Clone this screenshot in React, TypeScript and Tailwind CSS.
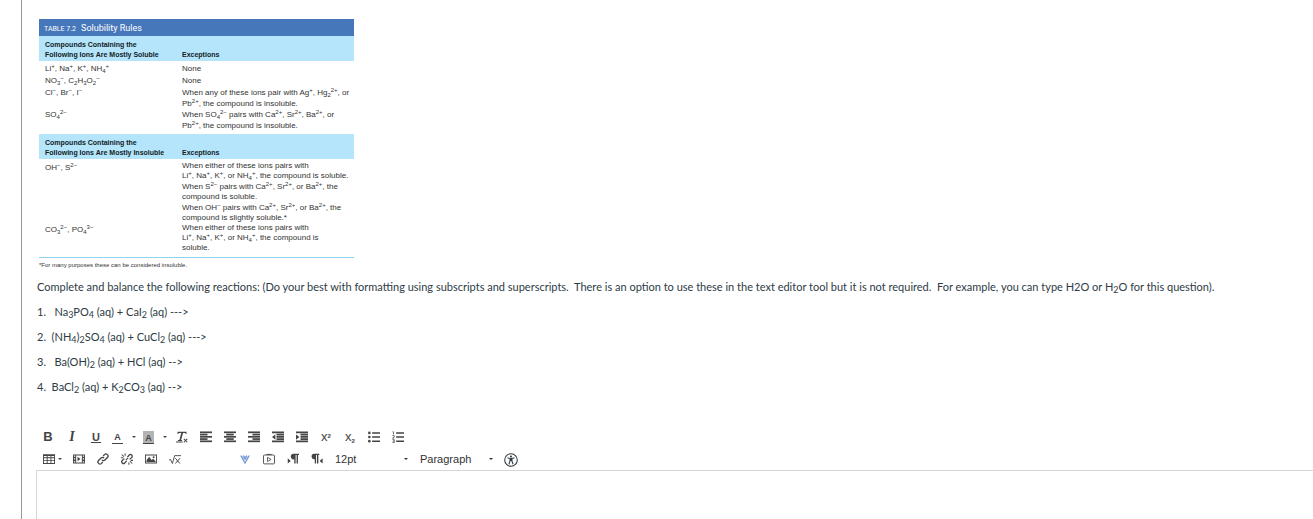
import type { ReactNode } from "react";

const iconBase = "h-3 w-3 shrink-0";

function Icon({ children, className = iconBase }: { children: ReactNode; className?: string }) {
  return (
    <svg viewBox="0 0 16 16" className={className} fill="currentColor" aria-hidden="true">
      {children}
    </svg>
  );
}

function Caret() {
  return (
    <svg viewBox="0 0 4 2" className="h-[2px] w-1 shrink-0" fill="currentColor" aria-hidden="true">
      <path d="M0 0h4L2 2z" />
    </svg>
  );
}

function Tool({ label, children }: { label: string; children: ReactNode }) {
  return (
    <button type="button" aria-label={label} className="flex h-5 w-6 shrink-0 items-center justify-center">
      {children}
    </button>
  );
}

function SplitTool({ label, children }: { label: string; children: ReactNode }) {
  return (
    <button type="button" aria-label={label} className="flex h-5 w-[31px] shrink-0 items-center justify-between pr-[3px] pl-1">
      {children}
      <Caret />
    </button>
  );
}

function Bars({ rows }: { rows: [number, number][] }) {
  return (
    <Icon>
      {rows.map(([x, w], i) => (
        <rect key={i} x={x} y={0.6 + i * 3} width={w} height={2.3} />
      ))}
    </Icon>
  );
}

function Sub({ children }: { children: ReactNode }) {
  return <sub className="text-[6px]">{children}</sub>;
}

function Sup({ children }: { children: ReactNode }) {
  return <sup className="text-[6px]">{children}</sup>;
}

function BandRow({ kind }: { kind: string }) {
  return (
    <tr className="h-[25px] bg-[#b5e5fa] text-left align-top text-[7px] leading-[10px] text-[#111c26]">
      <th scope="col" className="w-[143px] pt-1 pl-[6px] font-bold">
        Compounds Containing the
        <br />
        Following Ions Are Mostly {kind}
      </th>
      <th scope="col" className="pt-[14px] font-bold">
        Exceptions
      </th>
    </tr>
  );
}

function SolubilityTable() {
  return (
    <div className="ml-[2px] w-[315px] font-['Liberation_Sans',sans-serif] text-[8px] whitespace-nowrap text-[#333]">
      <table className="w-full border-collapse border-b border-[#8fd3ef]">
        <caption className="h-[17px] bg-[#4777bb] pl-[5px] text-left font-['Roboto',sans-serif] text-[9px] leading-[19px] text-white">
          <span className="mr-[5px] text-[7px]">TABLE 7.2</span>
          Solubility Rules
        </caption>
        <tbody>
          <BandRow kind="Soluble" />
          <tr className="h-[14px] align-bottom leading-[12px]">
            <td className="pl-[6px]">
              Li<Sup>+</Sup>, Na<Sup>+</Sup>, K<Sup>+</Sup>, NH<Sub>4</Sub><Sup>+</Sup>
            </td>
            <td>None</td>
          </tr>
          <tr className="leading-[12px]">
            <td className="pl-[6px]">
              NO<Sub>3</Sub><Sup>−</Sup>, C<Sub>2</Sub>H<Sub>3</Sub>O<Sub>2</Sub><Sup>−</Sup>
            </td>
            <td>None</td>
          </tr>
          <tr className="align-top leading-[11px]">
            <td className="pl-[6px]">
              Cl<Sup>−</Sup>, Br<Sup>−</Sup>, I<Sup>−</Sup>
            </td>
            <td>
              When any of these ions pair with Ag<Sup>+</Sup>, Hg<Sub>2</Sub><Sup>2+</Sup>, or
              <br />
              Pb<Sup>2+</Sup>, the compound is insoluble.
            </td>
          </tr>
          <tr className="h-[25px] align-top leading-[11px]">
            <td className="pl-[6px]">
              SO<Sub>4</Sub><Sup>2−</Sup>
            </td>
            <td>
              When SO<Sub>4</Sub><Sup>2−</Sup> pairs with Ca<Sup>2+</Sup>, Sr<Sup>2+</Sup>, Ba<Sup>2+</Sup>, or
              <br />
              Pb<Sup>2+</Sup>, the compound is insoluble.
            </td>
          </tr>
          <BandRow kind="Insoluble" />
          <tr className="align-top leading-[10px]">
            <td className="pt-1 pl-[6px]">
              OH<Sup>−</Sup>, S<Sup>2−</Sup>
            </td>
            <td className="pt-[2px]">
              <p className="pb-px">
                When either of these ions pairs with
                <br />
                Li<Sup>+</Sup>, Na<Sup>+</Sup>, K<Sup>+</Sup>, or NH<Sub>4</Sub><Sup>+</Sup>, the compound is soluble.
              </p>
              <p className="pb-px">
                When S<Sup>2−</Sup> pairs with Ca<Sup>2+</Sup>, Sr<Sup>2+</Sup>, or Ba<Sup>2+</Sup>, the
                <br />
                compound is soluble.
              </p>
              <p>
                When OH<Sup>−</Sup> pairs with Ca<Sup>2+</Sup>, Sr<Sup>2+</Sup>, or Ba<Sup>2+</Sup>, the
                <br />
                compound is slightly soluble.*
              </p>
            </td>
          </tr>
          <tr className="align-top leading-[10px]">
            <td className="pt-[2px] pl-[6px]">
              CO<Sub>3</Sub><Sup>2−</Sup>, PO<Sub>4</Sub><Sup>3−</Sup>
            </td>
            <td className="pb-1">
              When either of these ions pairs with
              <br />
              Li<Sup>+</Sup>, Na<Sup>+</Sup>, K<Sup>+</Sup>, or NH<Sub>4</Sub><Sup>+</Sup>, the compound is
              <br />
              soluble.
            </td>
          </tr>
        </tbody>
      </table>
      <p className="pt-[2px] text-[6px] leading-[10px]">*For many purposes these can be considered insoluble.</p>
    </div>
  );
}

function Q({ children }: { children: ReactNode }) {
  return <sub className="text-[9px]">{children}</sub>;
}

function Question() {
  return (
    <div className="mt-1 text-[11px] leading-[25px] whitespace-pre-wrap text-[#2d3b45]">
      <p>
        {"Complete and balance the following reactions: (Do your best with formatting using subscripts and superscripts.  There is an option to use these in the text editor tool but it is not required.  For example, you can type H2O or H"}
        <Q>2</Q>O for this question).
      </p>
      <p>
        {"1.   Na"}<Q>3</Q>PO<Q>4</Q> (aq) + CaI<Q>2</Q>{" (aq) --->"}
      </p>
      <p>
        {"2.  (NH"}<Q>4</Q>)<Q>2</Q>SO<Q>4</Q> (aq) + CuCl<Q>2</Q>{" (aq) --->"}
      </p>
      <p>
        {"3.   Ba(OH)"}<Q>2</Q>{" (aq) + HCl (aq) -->"}
      </p>
      <p>
        {"4.  BaCl"}<Q>2</Q> (aq) + K<Q>2</Q>CO<Q>3</Q>{" (aq) -->"}
      </p>
    </div>
  );
}

const linkPath =
  "M6.6 9.4a2.8 2.8 0 0 0 4 0l3.3-3.3a2.6 2.6 0 0 0-3.9-3.9L8.2 4M9.4 6.6a2.8 2.8 0 0 0-4 0L2.1 9.9A2.6 2.6 0 0 0 6 13.8L7.8 12";

function Toolbar() {
  return (
    <div role="toolbar" aria-label="Formatting" className="font-['Liberation_Sans',sans-serif] text-[#444]">
      <div className="flex h-[22px] items-center">
        <Tool label="Bold">
          <span className="text-[13px] leading-4 font-bold">B</span>
        </Tool>
        <Tool label="Italic">
          <span className="font-['Liberation_Serif',serif] text-[14px] leading-4 font-bold italic">I</span>
        </Tool>
        <Tool label="Underline">
          <span className="border-b border-[#444] px-px text-[11px] leading-[10px] font-bold">U</span>
        </Tool>
        <SplitTool label="Text color">
          <span className="w-[11px] border-b border-[#444] pt-[2px] text-center text-[9px] leading-[11px] font-bold">A</span>
        </SplitTool>
        <SplitTool label="Background color">
          <span className="w-[11px] border-b border-[#444] bg-[#b3b3b3] pt-[2px] text-center text-[9px] leading-[10px] font-bold">A</span>
        </SplitTool>
        <Tool label="Clear formatting">
          <Icon>
            <path d="M2 1h12v3h-1l-.7-1.4H9.4L6.8 12H8v1.4H2.5V12h2L7 2.6H4L2.8 4H2zM0 14h9v1.3H0z" />
            <path d="M10.5 10.5l4.5 4.5M15 10.5L10.5 15" stroke="currentColor" strokeWidth="1.4" />
          </Icon>
        </Tool>
        <Tool label="Align left">
          <Bars rows={[[0, 16], [0, 10], [0, 16], [0, 10], [0, 16]]} />
        </Tool>
        <Tool label="Align center">
          <Bars rows={[[0, 16], [3, 10], [0, 16], [3, 10], [0, 16]]} />
        </Tool>
        <Tool label="Align right">
          <Bars rows={[[0, 16], [6, 10], [0, 16], [6, 10], [0, 16]]} />
        </Tool>
        <Tool label="Decrease indent">
          <Icon>
            <path d="M0 .6h16v2.3H0zM6 3.6h10v2.3H6zM6 6.6h10v2.3H6zM6 9.6h10v2.3H6zM0 12.6h16v2.3H0zM4.5 4.5v7L0 8z" />
          </Icon>
        </Tool>
        <Tool label="Increase indent">
          <Icon>
            <path d="M0 .6h16v2.3H0zM6 3.6h10v2.3H6zM6 6.6h10v2.3H6zM6 9.6h10v2.3H6zM0 12.6h16v2.3H0zM0 4.5v7L4.5 8z" />
          </Icon>
        </Tool>
        <Tool label="Superscript">
          <span className="text-[13px] leading-4">
            x<sup className="text-[6px] font-bold">2</sup>
          </span>
        </Tool>
        <Tool label="Subscript">
          <span className="text-[13px] leading-4">
            x<sub className="text-[6px] font-bold">2</sub>
          </span>
        </Tool>
        <Tool label="Bullet list">
          <Icon>
            <path d="M5.5 1.5H16v2H5.5zM5.5 7H16v2H5.5zM5.5 12.5H16v2H5.5z" />
            <circle cx="1.8" cy="2.5" r="1.7" />
            <circle cx="1.8" cy="8" r="1.7" />
            <circle cx="1.8" cy="13.5" r="1.7" />
          </Icon>
        </Tool>
        <Tool label="Numbered list">
          <Icon>
            <path d="M5.5 1.5H16v2H5.5zM5.5 7H16v2H5.5zM5.5 12.5H16v2H5.5z" />
            <path d="M.8 1h1.2v3.5M.5 6.2H3v1.6L.8 9.5h2.4M.5 11.5H3v4H.5M1 13.5h2" fill="none" stroke="currentColor" />
          </Icon>
        </Tool>
      </div>
      <div className="flex h-[22px] items-center">
        <button type="button" aria-label="Table" className="flex h-5 w-[31px] shrink-0 items-center justify-between pr-[5px] pl-[7px]">
          <Icon>
            <path d="M0 1.5v13h16v-13zM5 13.3H1.2v-2.6H5zm0-3.8H1.2V7H5zm0-3.7H1.2V4H5zm5 7.5H6.2v-2.6H10zm0-3.8H6.2V7H10zm0-3.7H6.2V4H10zm4.8 7.5h-3.6v-2.6h3.6zm0-3.8h-3.6V7h3.6zm0-3.7h-3.6V4h3.6z" />
          </Icon>
          <Caret />
        </button>
        <Tool label="Media">
          <Icon>
            <path fillRule="evenodd" d="M0 2v12h16V2zM3 12.8H1.2V11H3zm0-4H1.2V7H3zm0-3.8H1.2V3.2H3zm8.8 7.8H4.2V3.2h7.6zm3 0H13V11h1.8zm0-4H13V7h1.8zm0-3.8H13V3.2h1.8zM6 5v6l4-3z" />
          </Icon>
        </Tool>
        <Tool label="Link">
          <Icon>
            <path d={linkPath} fill="none" stroke="currentColor" strokeWidth="1.7" />
          </Icon>
        </Tool>
        <Tool label="Remove link">
          <Icon>
            <path d="M8.6 5.5L11 2.7a2.3 2.3 0 0 1 3.3 3.3l-2.8 2.5M7.4 10.5L5 13.3A2.3 2.3 0 0 1 1.7 10l2.8-2.5" fill="none" stroke="currentColor" strokeWidth="1.7" />
            <path d="M1 2l3 3M5.5 .5v3M0 6.2h3M15 14l-3-3M10.5 15.5v-3M16 9.8h-3M6.5 9.5l3-3" stroke="currentColor" strokeWidth="1.4" />
          </Icon>
        </Tool>
        <Tool label="Image">
          <Icon>
            <path fillRule="evenodd" d="M0 2v12h16V2zm14.8 10.8H1.2V3.2h13.6z" />
            <path d="M2 12V9.5L5.5 5l3.2 4.2L11 7.6l3 3.4v1z" />
            <circle cx="11.5" cy="5.5" r="1.3" />
          </Icon>
        </Tool>
        <Tool label="Equation">
          <Icon>
            <path d="M0 9.5l2-.8L4.5 14 7.5 3.5H16" fill="none" stroke="currentColor" strokeWidth="1.2" />
            <path d="M8.5 7l6 7M14.5 7l-6 7" stroke="currentColor" strokeWidth="1.3" />
          </Icon>
        </Tool>
        <span className="w-[46px] shrink-0" />
        <Tool label="Vericite">
          <svg viewBox="0 0 10 9" className="h-[9px] w-[10px] text-[#6f93d2]" fill="none" stroke="currentColor" aria-hidden="true">
            <path d="M.7.5L5 8 9.3.5M3.3.5L5 4 6.7.5" strokeWidth="1.2" />
            <path d="M1.5 2h7M2.6 4h4.8" strokeWidth=".8" />
          </svg>
        </Tool>
        <Tool label="Record media">
          <Icon>
            <rect x=".7" y="2.7" width="14.6" height="11.8" rx="1.2" fill="none" stroke="currentColor" strokeWidth="1.2" />
            <path d="M6 5.8v5.6l4.8-2.8z" fill="none" stroke="currentColor" strokeWidth="1.1" />
            <path d="M4.5 1.2h7v1.2h-7z" />
          </Icon>
        </Tool>
        <Tool label="Left to right">
          <Icon>
            <path d="M8 1h8v1.8h-1.4V14h-1.8V2.8h-1.3V14H9.7V8.4A3.7 3.7 0 0 1 8 1zM1 7l4 3.5L1 14z" />
          </Icon>
        </Tool>
        <Tool label="Right to left">
          <Icon>
            <path d="M4 1h7v1.8H9.8V14H8V2.8H6.8V14H5V8.4A3.7 3.7 0 0 1 4 1zM15.5 7l-4 3.5 4 3.5z" />
          </Icon>
        </Tool>
        <div className="flex w-[84px] shrink-0 items-center justify-between pr-[5px] pl-[6px] text-[#333]">
          <select aria-label="Font size" className="w-[60px] appearance-none text-[11px] leading-4">
            <option>12pt</option>
          </select>
          <Caret />
        </div>
        <div className="flex w-[80px] shrink-0 items-center justify-between pl-[7px] text-[#333]">
          <select aria-label="Block format" className="w-[64px] appearance-none text-[11px] leading-4">
            <option>Paragraph</option>
          </select>
          <Caret />
        </div>
        <button type="button" aria-label="Check accessibility" className="ml-[11px] flex h-5 shrink-0 items-center pt-[2px] text-[#2d3b45]">
          <Icon className="h-[14px] w-[14px] shrink-0">
            <circle cx="8" cy="8" r="7.2" fill="none" stroke="currentColor" strokeWidth="1.2" />
            <circle cx="8" cy="4" r="1.2" />
            <path d="M4 5.5l2.8.7h2.4l2.8-.7M6.9 6v3.2L5.6 12.8M9.1 6v3.2l1.3 3.6M8 6v3" fill="none" stroke="currentColor" strokeWidth="1.2" />
          </Icon>
        </button>
      </div>
    </div>
  );
}

export default function App() {
  return (
    <main className="flex min-h-screen bg-white pl-[21px] font-['Lato',sans-serif]">
      <div className="flex min-w-0 flex-1 flex-col border-l border-[#999] pt-[19px] pl-[14px]">
        <div className="pl-px">
          <SolubilityTable />
          <Question />
        </div>
        <div className="mt-[27px] flex flex-1 flex-col">
          <Toolbar />
          <textarea
            aria-label="Answer"
            rows={1}
            className="w-full flex-1 resize-none border-t border-l border-[#d6d6d6] p-2 text-[12px] text-[#2d3b45] outline-none"
          />
        </div>
      </div>
    </main>
  );
}
